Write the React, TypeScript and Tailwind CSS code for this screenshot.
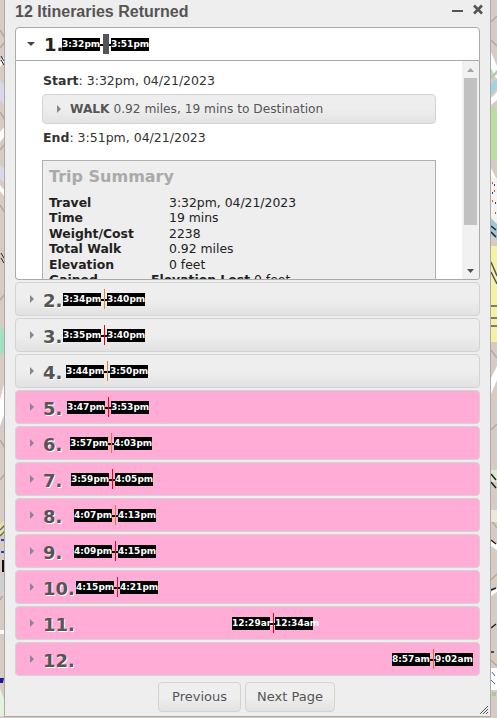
import React from 'react';

type Row = {
  n: number;
  start: string;
  end: string;
  left: string;
  tick: string;
  gap?: string;
  pink?: boolean;
};

const rows: Row[] = [
  { n: 2, start: '3:34pm', end: '3:40pm', left: 'ml-[47px]', tick: 'bg-[#e8891c]' },
  { n: 3, start: '3:35pm', end: '3:40pm', left: 'ml-[47px]', tick: 'bg-[#f00000]' },
  { n: 4, start: '3:44pm', end: '3:50pm', left: 'ml-[50px]', tick: 'bg-[#d9822b]' },
  { n: 5, start: '3:47pm', end: '3:53pm', left: 'ml-[51px]', tick: 'bg-[#f00000]', pink: true },
  { n: 6, start: '3:57pm', end: '4:03pm', left: 'ml-[54px]', tick: 'bg-[#e8791c]', pink: true },
  { n: 7, start: '3:59pm', end: '4:05pm', left: 'ml-[55px]', tick: 'bg-[#f00000]', pink: true },
  { n: 8, start: '4:07pm', end: '4:13pm', left: 'ml-[58px]', tick: 'bg-[#e8791c]', pink: true },
  { n: 9, start: '4:09pm', end: '4:15pm', left: 'ml-[58px]', tick: 'bg-[#f00000]', pink: true },
  { n: 10, start: '4:15pm', end: '4:21pm', left: 'ml-[60px]', tick: 'bg-[#e8102c]', pink: true },
  { n: 11, start: '12:29am', end: '12:34am', left: 'ml-[216px]', tick: 'bg-[#f00000]', gap: 'w-[5px]', pink: true },
  { n: 12, start: '8:57am', end: '9:02am', left: 'ml-[376px]', tick: 'bg-[#e8691c]', gap: 'w-[5px]', pink: true },
];

const summary = [
  ['Travel', '3:32pm, 04/21/2023'],
  ['Time', '19 mins'],
  ['Weight/Cost', '2238'],
  ['Total Walk', '0.92 miles'],
  ['Elevation', '0 feet'],
];

const timeClass =
  'w-[38px] h-[13px] mt-[10px] shrink-0 bg-black text-white text-[9px] font-bold leading-[13px] whitespace-nowrap';

function Timeline({ start, end, left, tick, gap = 'w-[6px]', tickWidth = 'w-px' }: Pick<Row, 'start' | 'end' | 'left' | 'tick' | 'gap'> & { tickWidth?: string }) {
  return (
    <div className={`absolute left-0 top-0 flex items-start ${left}`}>
      <span className={timeClass}>{start}</span>
      <div className={`relative h-[2px] mt-[16px] shrink-0 bg-black ${gap}`}>
        <div className={`absolute left-[3px] top-[-10px] h-[20px] ${tickWidth} ${tick}`} />
      </div>
      <span className={timeClass}>{end}</span>
    </div>
  );
}

function Caret({ open }: { open?: boolean }) {
  return (
    <svg width="8" height="8" viewBox="0 0 8 8" className="shrink-0">
      {open ? <path d="M0 2h8L4 6z" fill="#444" /> : <path d="M2 0v8l4-4z" fill="#888" />}
    </svg>
  );
}

function MapStrip() {
  return (
    <svg className="absolute inset-0" width="497" height="718">
      <rect width="497" height="718" fill="#d6ccc4" />
      {/* left edge */}
      <path d="M0 80l5 6v20l-5-6zM0 165l5 4v14l-5-4z" fill="#d8d8e6" />
      <path d="M0 62l5-6v5l-5 6zM0 132l5-6v10l-5 6zM0 185l5 6v6l-5-6zM0 400l5-20v32l-5 14z" fill="#fff" />
      <path d="M0 30l5 8M0 48l5-6M0 112l5 8M0 150l5-6M0 205l5 8M0 300l5-6M0 440l5 8M0 480l5-6M0 600l5-8" stroke="#b8a89c" strokeWidth="1.5" />
      <path d="M1 56l3 5M1 60l3 5M1 253l3 5M1 258l3 5" stroke="#222" strokeWidth="1" />
      <path d="M0 325l5 8v22l-5-2z" fill="#a3e0c2" />
      <path d="M0 525l5-6v14l-5 4z" fill="#e9e2a8" />
      <path d="M0 530l5-5M0 536l5-5" stroke="#666" strokeWidth="1.5" />
      <path d="M1 540h3M1 552h3" stroke="#3344bb" strokeWidth="2" />
      <path d="M2 560h3v12h-3z" fill="#111" />
      <path d="M0 578h5v18h-5z" fill="#cfcfcf" />
      <path d="M0 630h5v4h-5z" fill="#fff" />
      <path d="M0 678h4l-1 5h-3z" fill="#1a1a8c" />
      <path d="M0 688l5 14v14h-5z" fill="#e2f5dc" />
      {/* right edge */}
      <path d="M491 52l6 14v14l-6-12zM491 98l6-6v8l-6 5zM491 168l6 12v8l-6-10z" fill="#fff" />
      <path d="M491 76l6-6v4l-6 5z" fill="#a8d49a" />
      <path d="M491 84l6-6v10l-6 7z" fill="#a3d2e0" />
      <path d="M491 108h6v52h-6z" fill="#bcdca0" />
      <path d="M491 178h6v50h-6z" fill="#f5f3ee" />
      <path d="M492 182h1v2h-1zM494 190h1v2h-1zM492 200h1v2h-1zM495 212h1v2h-1z" fill="#e05030" />
      <path d="M494 184h1v2h-1zM492 192h1v2h-1zM495 202h1v2h-1z" fill="#2040c0" />
      <path d="M491 218l6 6v16l-6-6z" fill="#9cc8d8" />
      <path d="M491 226l5 4M491 232l5 5" stroke="#222" strokeWidth="1.5" />
      <path d="M491 246h6v96h-6z" fill="#f5f2a4" />
      <path d="M491 262l6 14M491 272l6 12M491 306h6M491 318h6M491 326h6" stroke="#555" strokeWidth="1.5" />
      <path d="M491 22l6-6M491 40l6 6M491 350l6 8M491 430l6-6M491 520l6 8M491 580l6-6M491 660l6 6" stroke="#b8a89c" strokeWidth="1.5" />
      <path d="M491 378l6-12v14l-6 14zM491 540l6 4v6l-6-4zM491 592l6-4v4l-6 4z" fill="#fff" />
      <path d="M491 470h6v12h-6z" fill="#dcebd0" />
      <path d="M491 474l5 6M491 482l5 6M491 540l5 4M491 590l5-2M491 628l5-4M491 652l3 0" stroke="#222" strokeWidth="1.5" />
      <path d="M491 510h6v12h-6z" fill="#ece7da" />
      <path d="M491 668h6v22h-6z" fill="#fff" />
      <path d="M492 672l3 4M491 680l4 4" stroke="#5060d0" strokeWidth="1" />
      <path d="M492 692h4v4h-4z" fill="#a8c89a" />
    </svg>
  );
}

export default function App() {
  return (
    <div className="relative w-[497px] h-[718px] overflow-hidden font-['DejaVu_Sans',sans-serif]">
      <MapStrip />
      <div className="relative ml-[4px] w-[487px] h-[717px] bg-[#eeeeee] border-x border-b border-[#aaaaaa] px-[10px] flex flex-col">
        <div className="h-[27px] shrink-0 flex justify-between">
          <span className="font-['Liberation_Sans',sans-serif] font-bold text-[16px] leading-[23px] text-[#555555]">12 Itineraries Returned</span>
          <div className="flex items-start gap-[10px] mt-[4px] mr-[-3px]">
            <svg width="11" height="11" viewBox="0 0 11 11"><path d="M0 7h11" stroke="#555" strokeWidth="2" /></svg>
            <svg width="10" height="11" viewBox="0 0 10 11"><path d="M1 1.5l8 8M9 1.5l-8 8" stroke="#555" strokeWidth="2.6" /></svg>
          </div>
        </div>

        <div className="h-[34px] shrink-0 bg-white border border-[#aaaaaa] rounded-t-[4px] relative flex items-center pl-[11px]">
          <Caret open />
          <span className="ml-[9px] text-[18px] font-bold text-[#222222]">1.</span>
          <Timeline start="3:32pm" end="3:51pm" left="ml-[46px]" tick="bg-[#555555]" gap="w-[11px]" tickWidth="w-[6px]" />
        </div>

        <div className="h-[219px] shrink-0 bg-white border-x border-b border-[#aaaaaa] rounded-b-[4px] flex overflow-hidden">
          <div className="flex-1 pl-[26px] pr-[26px] text-[12.5px] text-[#333333] overflow-hidden">
            <div className="mt-[12px] pl-px h-[16px] leading-[16px]"><b>Start</b>: 3:32pm, 04/21/2023</div>
            <div className="mt-[5px] h-[30px] border border-[#d3d3d3] rounded-[4px] bg-[linear-gradient(#eeeeee_50%,#e2e2e2_100%)] flex items-center pl-[13px] text-[12.2px] text-[#555555]">
              <svg width="6" height="8" viewBox="0 0 6 8"><path d="M1 0v8l4-4z" fill="#888" /></svg>
              <span className="ml-[8px]"><b>WALK</b> 0.92 miles, 19 mins to Destination</span>
            </div>
            <div className="mt-[6px] pl-px h-[16px] leading-[16px]"><b>End</b>: 3:51pm, 04/21/2023</div>
            <div className="mt-[14px] border border-[#b0b0b0] bg-[#eeeeee] px-[6px] pt-[6px] h-[130px] text-[12.4px]">
              <div className="text-[16px] font-bold text-[#aaaaaa] leading-[20px]">Trip Summary</div>
              <div className="mt-[8px] text-[#222222]">
                {summary.map(([k, v]) => (
                  <div key={k} className="flex h-[15.4px] leading-[15.4px]">
                    <b className="w-[120px]">{k}</b>
                    <span>{v}</span>
                  </div>
                ))}
                <div className="flex h-[15.4px] leading-[15.4px]">
                  <b className="w-[102px]">Gained</b>
                  <span><b>Elevation Lost</b> 0 feet</span>
                </div>
              </div>
            </div>
          </div>
          <div className="w-[17px] shrink-0 bg-[#f1f1f1] flex flex-col items-center">
            <svg width="9" height="17" viewBox="0 0 9 17"><path d="M1 11l3.5-4 3.5 4z" fill="#a3a3a3" /></svg>
            <div className="w-[13px] h-[147px] bg-[#c1c1c1]" />
            <div className="flex-1" />
            <svg width="9" height="17" viewBox="0 0 9 17"><path d="M1 7l3.5 4 3.5-4z" fill="#505050" /></svg>
          </div>
        </div>

        <div className="mt-[2px] flex flex-col gap-[2px] shrink-0">
          {rows.map((r) => (
            <div
              key={r.n}
              className={`relative h-[34px] rounded-[4px] border border-[#d3d3d3] flex items-center pl-[12px] ${r.pink ? 'bg-[#ffadd6]' : 'bg-[linear-gradient(#eeeeee_50%,#e2e2e2_100%)]'}`}
            >
              <Caret />
              <span className="ml-[7px] mt-[2px] text-[18px] font-bold text-[#555555] [text-shadow:1px_1px_0_#fff]">{r.n}.</span>
              <Timeline start={r.start} end={r.end} left={r.left} tick={r.tick} gap={r.gap} />
            </div>
          ))}
        </div>

        <div className="mt-[6px] ml-[-2px] flex justify-center gap-[4px] shrink-0">
          <div className="w-[83px] h-[30px] flex items-center justify-center border border-[#d3d3d3] rounded-[4px] text-[13px] text-[#555555] bg-[linear-gradient(#eeeeee_50%,#e2e2e2_100%)]">
            Previous
          </div>
          <div className="w-[90px] h-[30px] flex items-center justify-center border border-[#d3d3d3] rounded-[4px] text-[13px] text-[#555555] bg-[linear-gradient(#eeeeee_50%,#e2e2e2_100%)]">
            Next Page
          </div>
        </div>

        <svg className="absolute right-[2px] bottom-[2px]" width="8" height="8" viewBox="0 0 8 8">
          <path d="M0 8l8-8M3 8l5-5M6 8l2-2" stroke="#555" strokeWidth="1" />
        </svg>
      </div>
    </div>
  );
}
